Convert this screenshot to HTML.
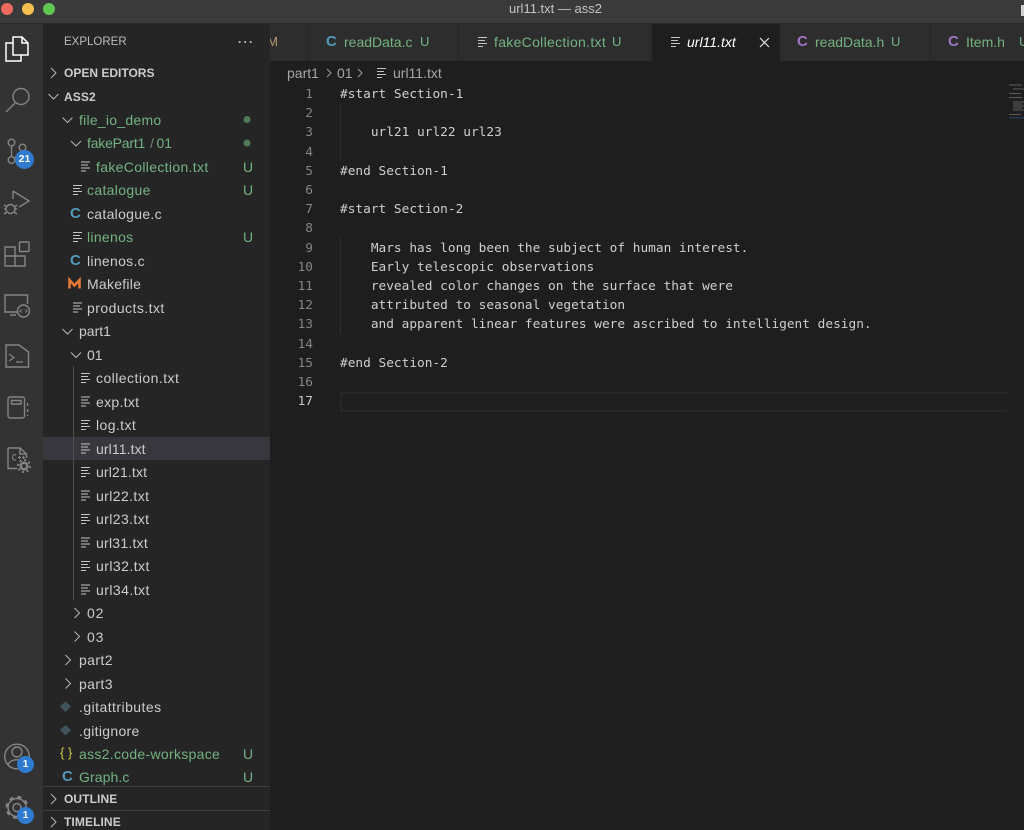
<!DOCTYPE html>
<html><head><meta charset="utf-8"><style>
html,body{margin:0;padding:0;background:#1e1e1e;width:1024px;height:830px;overflow:hidden}
#r{position:relative;width:1024px;height:830px;overflow:hidden;font-family:"Liberation Sans",sans-serif;font-size:14px;color:#cccccc}
#r div,#r span.a,#r svg{position:absolute}
.t{white-space:nowrap;line-height:20px;height:20px}
.g{color:#73b381}
.ln{width:34px;text-align:right;left:279px;color:#858585;font:12.8px/19.2px "DejaVu Sans Mono",monospace;height:19.2px}
.c{left:340px;color:#cfcfcf;font:12.8px/19.2px "DejaVu Sans Mono",monospace;white-space:pre;height:19.2px}
.h{font-weight:bold;font-size:12px;color:#cccccc;letter-spacing:.1px}
.u{color:#73b381;font-size:14px}
.cc{font-weight:bold;font-size:15px;color:#519aba;line-height:20px;height:20px}
.ch{fill:none;stroke:#b8b8b8;stroke-width:1}
.b{border-radius:50%;background:#2f7bd0;color:#fff;font-weight:bold;text-align:center}
.ic{fill:none;stroke:#858585;stroke-width:1.4}
</style></head><body><div id="r">
<!-- title bar -->
<div style="left:0;top:0;width:1024px;height:23px;background:#3a3a3a;border-bottom:1px solid #2a2a2a"></div>
<div style="left:1px;top:3px;width:12px;height:12px;border-radius:50%;background:#ed6a5e"></div>
<div style="left:22px;top:3px;width:12px;height:12px;border-radius:50%;background:#f5bf4f"></div>
<div style="left:43px;top:3px;width:12px;height:12px;border-radius:50%;background:#62c554"></div>
<div class="t" style="left:509px;top:-1px;font-size:13px;color:#c4c4c4">url11.txt — ass2</div>
<div style="left:1021px;top:5px;width:3px;height:11px;background:#d0d0d0"></div>
<!-- activity bar -->
<div style="left:0;top:24px;width:43px;height:806px;background:#333333"></div>
<svg style="left:0;top:24px" width="43" height="806" viewBox="0 24 43 806">
<g fill="none" stroke="#ffffff" stroke-width="1.5"><path d="M13 37H22L28 43V55H13Z"/><path d="M22 37V43H28"/><path d="M13 43H6V61H21V55"/></g>
<g class="ic"><circle cx="21" cy="96.500" r="8"/><path d="M15 103L6 112"/>
<circle cx="11.500" cy="142.500" r="3.300"/><circle cx="22.500" cy="147.500" r="3.300"/><circle cx="11.500" cy="160" r="3.300"/><path d="M11.500 146V156.500M22.500 151C22 155 16 155 14.500 158"/>
<path d="M13 191L29 201L19 207M13 191V199"/><circle cx="10.500" cy="209" r="4.500"/><path d="M4 205L7 207M4 209H6M4 214L7 212M17 205L14 207M17 209H15M17 214L14 212"/>
<path d="M5 247H15V266H5ZM5 256H25V266H15"/><rect x="19.500" y="242" width="9.500" height="9.500" rx="1"/>
<path d="M27.500 304V295H5V312H17M10 315H16"/><circle cx="23.500" cy="311" r="6"/><path d="M21.500 309.500L20 311L21.500 312.500M25.500 309.500L27 311L25.500 312.500" stroke-width="1"/>
<path d="M6 345H19L28.500 352V367H6Z"/><path d="M9 354L14 357.500L9 361M16 362H23" stroke-width="1.2"/>
<rect x="8" y="397" width="16.500" height="21" rx="2"/><path d="M11.500 400.500H21V404H11.500Z M27.500 403V406M27.500 409V412M27.500 415V416"/>
<path d="M8 448H20L26.500 454V458M17 468.500H8V448"/><path d="M20 448V454H26"/><path d="M16 455C12 453 11 461 16 460M18 457.500H21M19.500 456V459M22 457.500H25M23.500 456V459" stroke-width="1.100"/><circle cx="24" cy="466" r="3.300" stroke-width="2.500"/><circle cx="24" cy="466" r="6" stroke-dasharray="2 2.700" stroke-width="2"/>
<circle cx="17" cy="756.500" r="12.300"/><circle cx="17" cy="752" r="5"/><path d="M8 765C10 758 24 758 26 765"/>
<circle cx="17" cy="807.500" r="4"/><circle cx="17" cy="807.500" r="9"/><circle cx="17" cy="807.500" r="10.500" stroke-dasharray="4.100 4.150" stroke-width="2.200"/></g>
</svg>
<div class="b" style="left:15px;top:150px;width:19px;height:19px;font-size:10.500px;line-height:19px">21</div>
<div class="b" style="left:17px;top:756px;width:17px;height:17px;font-size:10px;line-height:17px">1</div>
<div class="b" style="left:17px;top:807px;width:17px;height:17px;font-size:10px;line-height:17px">1</div>
<!-- sidebar -->
<div style="left:43px;top:24px;width:227px;height:806px;background:#252526"></div>
<div class="t" style="left:64px;top:32px;font-size:11.500px;color:#bbbbbb">EXPLORER</div>
<div class="t" style="left:238px;top:32px;font-size:12px;font-weight:bold;letter-spacing:1.500px;color:#c5c5c5">···</div>
<div style="left:43px;top:436.500px;width:227px;height:23.500px;background:#37373d"></div>
<div style="left:72.500px;top:366px;width:1.500px;height:234px;background:#505050"></div>
<div style="left:43px;top:786px;width:227px;height:1px;background:#3f3f3f"></div>
<div style="left:43px;top:810px;width:227px;height:1px;background:#3f3f3f"></div>
<svg style="left:43px;top:24px" width="227" height="806" viewBox="43 24 227 806">
<g class="ch"><path d="M51 68L56 73L51 78"/><path d="M48.500 94L53.500 99L58.500 94"/><path d="M62.500 117.500L67.500 122.500L72.500 117.500"/><path d="M71 141L76 146L81 141"/>
<path d="M62.500 329L67.500 334L72.500 329"/><path d="M71 352.500L76 357.500L81 352.500"/>
<path d="M74.500 608L79.500 613L74.500 618"/><path d="M74.500 631.500L79.500 636.500L74.500 641.500"/><path d="M65.500 655L70.500 660L65.500 665"/><path d="M65.500 678.500L70.500 683.500L65.500 688.500"/>
<path d="M51 794L56 799L51 804"/><path d="M51 817L56 822L51 827"/></g>
<g stroke="#c5c5c5" stroke-width="1" id="lines">
<path d="M81 162H90M81 165H88M81 168H90M81 171H86"/>
<path d="M73 185.500H82M73 188.500H80M73 191.500H82M73 194.500H78"/>
<path d="M73 232.500H82M73 235.500H80M73 238.500H82M73 241.500H78"/>
<path d="M73 303H82M73 306H80M73 309H82M73 312H78"/>
<path d="M81 373.500H90M81 376.500H88M81 379.500H90M81 382.500H86"/>
<path d="M81 397H90M81 400H88M81 403H90M81 406H86"/>
<path d="M81 420.500H90M81 423.500H88M81 426.500H90M81 429.500H86"/>
<path d="M81 444H90M81 447H88M81 450H90M81 453H86"/>
<path d="M81 467.500H90M81 470.500H88M81 473.500H90M81 476.500H86"/>
<path d="M81 491H90M81 494H88M81 497H90M81 500H86"/>
<path d="M81 514.500H90M81 517.500H88M81 520.500H90M81 523.500H86"/>
<path d="M81 538H90M81 541H88M81 544H90M81 547H86"/>
<path d="M81 561.500H90M81 564.500H88M81 567.500H90M81 570.500H86"/>
<path d="M81 585H90M81 588H88M81 591H90M81 594H86"/>
</g>
<circle cx="247" cy="119.500" r="3.500" fill="#4f7a58"/><circle cx="247" cy="143" r="3.500" fill="#4f7a58"/>
<path d="M69.500 288.500V280L74.500 285.500L79.500 280V288.500" fill="none" stroke="#e37933" stroke-width="2.600"/>
<path d="M65.500 706.500L71 701.500L76.500 706.500L71 712Z M65.500 730L71 725L76.500 730L71 735.500Z" transform="translate(-5.500 0)" fill="#41535b"/>
</svg>
<div class="t h" style="left:64px;top:63px;letter-spacing:0">OPEN EDITORS</div>
<div class="t h" style="left:64px;top:87px">ASS2</div>
<div class="t g" style="left:79px;top:110px;letter-spacing:.25px">file_io_demo</div>
<div class="t g" style="left:87px;top:133px;letter-spacing:-.2px">fakePart1</div>
<div class="t" style="left:150px;top:133px;color:#6f8a75">/</div>
<div class="t g" style="left:156.500px;top:133px">01</div>
<div class="t g" style="left:96px;top:157px;letter-spacing:.33px">fakeCollection.txt</div>
<div class="t g" style="left:87px;top:180px;letter-spacing:.33px">catalogue</div>
<div class="t" style="left:87px;top:204px;letter-spacing:.3px">catalogue.c</div>
<div class="t g" style="left:87px;top:227px;letter-spacing:.3px">linenos</div>
<div class="t" style="left:87px;top:251px;letter-spacing:.3px">linenos.c</div>
<div class="t" style="left:87px;top:274px;letter-spacing:.25px">Makefile</div>
<div class="t" style="left:87px;top:298px;letter-spacing:.45px">products.txt</div>
<div class="t" style="left:79px;top:321px">part1</div>
<div class="t" style="left:87px;top:345px">01</div>
<div class="t" style="left:96px;top:368px;letter-spacing:.45px">collection.txt</div>
<div class="t" style="left:96px;top:392px;letter-spacing:.3px">exp.txt</div>
<div class="t" style="left:96px;top:415px;letter-spacing:.4px">log.txt</div>
<div class="t" style="left:96px;top:439px;letter-spacing:.1px">url11.txt</div>
<div class="t" style="left:96px;top:462px;letter-spacing:.15px">url21.txt</div>
<div class="t" style="left:96px;top:486px;letter-spacing:.4px">url22.txt</div>
<div class="t" style="left:96px;top:509px;letter-spacing:.4px">url23.txt</div>
<div class="t" style="left:96px;top:533px;letter-spacing:.25px">url31.txt</div>
<div class="t" style="left:96px;top:556px;letter-spacing:.45px">url32.txt</div>
<div class="t" style="left:96px;top:580px;letter-spacing:.45px">url34.txt</div>
<div class="t" style="left:87px;top:603px;letter-spacing:.8px">02</div>
<div class="t" style="left:87px;top:627px;letter-spacing:.8px">03</div>
<div class="t" style="left:79px;top:650px;letter-spacing:.4px">part2</div>
<div class="t" style="left:79px;top:674px;letter-spacing:.4px">part3</div>
<div class="t" style="left:79px;top:697px;letter-spacing:.45px">.gitattributes</div>
<div class="t" style="left:79px;top:721px;letter-spacing:.3px">.gitignore</div>
<div class="t g" style="left:79px;top:744px;letter-spacing:.3px">ass2.code-workspace</div>
<div class="t g" style="left:79px;top:767px;letter-spacing:.1px">Graph.c</div>
<div class="t" style="left:60px;top:743px;font-size:13px;color:#cbcb41">{ }</div>
<div class="t cc" style="left:70px;top:204px">C</div>
<div class="t cc" style="left:70px;top:251px">C</div>
<div class="t cc" style="left:62px;top:767px">C</div>
<div class="t u" style="left:243px;top:157px">U</div>
<div class="t u" style="left:243px;top:180px">U</div>
<div class="t u" style="left:243px;top:227px">U</div>
<div class="t u" style="left:243px;top:744px">U</div>
<div class="t u" style="left:243px;top:767px">U</div>
<div class="t h" style="left:64px;top:789px">OUTLINE</div>
<div class="t h" style="left:64px;top:812px">TIMELINE</div>
<!-- tabs -->
<div style="left:270px;top:24px;width:754px;height:37px;background:#2d2d2d"></div>
<div style="left:308px;top:24px;width:1px;height:37px;background:#252526"></div>
<div style="left:458px;top:24px;width:1px;height:37px;background:#252526"></div>
<div style="left:650px;top:24px;width:1px;height:37px;background:#252526"></div>
<div style="left:930px;top:24px;width:1px;height:37px;background:#252526"></div>
<div style="left:652px;top:24px;width:128px;height:37px;background:#1e1e1e"></div>
<div class="t" style="left:270px;top:32px;color:#b49a72;font-size:13px;width:8px;overflow:hidden;direction:rtl">M</div>
<div class="t cc" style="left:326px;top:32px">C</div>
<div class="t g" style="left:344px;top:32px">readData.c</div>
<div class="t u" style="left:420px;top:32px;font-size:13px">U</div>
<div class="t g" style="left:494px;top:32px;letter-spacing:.3px">fakeCollection.txt</div>
<div class="t u" style="left:612px;top:32px;font-size:13px">U</div>
<div class="t" style="left:687px;top:32px;color:#fff;font-style:italic">url11.txt</div>
<div class="t cc" style="left:797px;top:32px;color:#a074c4">C</div>
<div class="t g" style="left:815px;top:32px">readData.h</div>
<div class="t u" style="left:891px;top:32px;font-size:13px">U</div>
<div class="t cc" style="left:948px;top:32px;color:#a074c4">C</div>
<div class="t g" style="left:966px;top:32px">Item.h</div>
<div class="t u" style="left:1019px;top:32px;font-size:13px">U</div>
<svg style="left:270px;top:24px" width="754" height="70" viewBox="270 24 754 70">
<g stroke="#c5c5c5" stroke-width="1"><path d="M478 37.500H487M478 40.500H485M478 43.500H487M478 46.500H483"/>
<path d="M671 37.500H680M671 40.500H678M671 43.500H680M671 46.500H676"/>
<path d="M377 68.500H386M377 71.500H384M377 74.500H386M377 77.500H382"/></g>
<path d="M760 38L769 47M769 38L760 47" stroke="#e0e0e0" stroke-width="1.200" fill="none"/>
<path d="M327 69L331 73L327 77M358 69L362 73L358 77" stroke="#a0a0a0" stroke-width="1" fill="none"/>
</svg>
<!-- breadcrumbs -->
<div class="t" style="left:287px;top:63px;color:#a6a6a6">part1</div>
<div class="t" style="left:337px;top:63px;color:#a6a6a6">01</div>
<div class="t" style="left:393px;top:63px;color:#a6a6a6">url11.txt</div>
<!-- editor -->
<div style="left:340px;top:392px;width:665px;height:16px;border:2px solid #272727;border-right:none;box-sizing:content-box"></div>
<div style="left:340px;top:104px;width:1px;height:57px;background:#2e2e2e"></div>
<div style="left:340px;top:238px;width:1px;height:96px;background:#2e2e2e"></div>
<div class="ln" style="top:85px">1</div>
<div class="ln" style="top:104.200px">2</div>
<div class="ln" style="top:123.400px">3</div>
<div class="ln" style="top:142.600px">4</div>
<div class="ln" style="top:161.800px">5</div>
<div class="ln" style="top:181px">6</div>
<div class="ln" style="top:200.200px">7</div>
<div class="ln" style="top:219.400px">8</div>
<div class="ln" style="top:238.600px">9</div>
<div class="ln" style="top:257.800px">10</div>
<div class="ln" style="top:277px">11</div>
<div class="ln" style="top:296.200px">12</div>
<div class="ln" style="top:315.400px">13</div>
<div class="ln" style="top:334.600px">14</div>
<div class="ln" style="top:353.800px">15</div>
<div class="ln" style="top:373px">16</div>
<div class="ln" style="top:392.200px;color:#c6c6c6">17</div>
<div class="c" style="top:85px">#start Section-1</div>
<div class="c" style="top:123.400px">    url21 url22 url23</div>
<div class="c" style="top:161.800px">#end Section-1</div>
<div class="c" style="top:200.200px">#start Section-2</div>
<div class="c" style="top:238.600px">    Mars has long been the subject of human interest.</div>
<div class="c" style="top:257.800px">    Early telescopic observations</div>
<div class="c" style="top:277px">    revealed color changes on the surface that were</div>
<div class="c" style="top:296.200px">    attributed to seasonal vegetation</div>
<div class="c" style="top:315.400px">    and apparent linear features were ascribed to intelligent design.</div>
<div class="c" style="top:353.800px">#end Section-2</div>
<!-- minimap -->
<svg style="left:1009px;top:84px" width="15" height="36" viewBox="0 0 15 36">
<g fill="#5c5c5c"><rect x="0" y="0.500" width="13" height="1"/><rect x="4" y="4.500" width="11" height="1"/><rect x="0" y="9" width="12" height="1"/><rect x="0" y="13" width="13" height="1"/><rect x="4" y="17.500" width="11" height="1"/><rect x="4" y="19.500" width="9" height="1"/><rect x="4" y="21.500" width="11" height="1"/><rect x="4" y="23.500" width="9" height="1"/><rect x="4" y="25.500" width="11" height="1"/><rect x="0" y="30" width="12" height="1"/></g>
<rect x="0" y="33" width="15" height="1.500" fill="#1f3a52"/>
</svg>
</div></body></html>
